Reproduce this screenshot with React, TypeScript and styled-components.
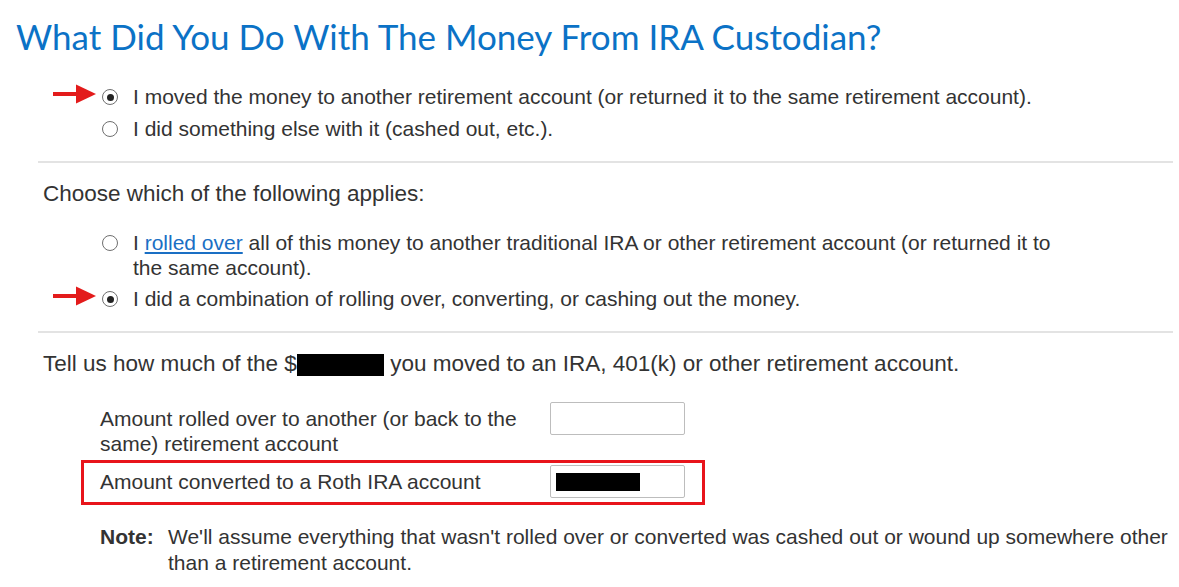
import React from 'react';
import styled, { createGlobalStyle } from 'styled-components';

const GlobalStyle = createGlobalStyle`
  html, body {
    margin: 0;
    padding: 0;
    background: #ffffff;
  }
  body {
    font-family: "Liberation Sans", Arial, sans-serif;
    color: #333333;
  }
`;

function Arrow() {
  return (
    <ArrowWrapper>
      <svg width="43" height="20" viewBox="0 0 43 20">
        <rect x="0" y="8" width="25" height="4" fill="#e31b1b" />
        <polygon points="23,0.5 43,10 23,19.5" fill="#e31b1b" />
      </svg>
    </ArrowWrapper>
  );
}

interface RadioOptionProps {
  checked?: boolean;
  marked?: boolean;
  children: React.ReactNode;
}

function RadioOption({ checked = false, marked = false, children }: RadioOptionProps) {
  return (
    <OptionRow>
      <MarkerSlot>{marked && <Arrow />}</MarkerSlot>
      <RadioCircle $checked={checked} />
      <OptionText>{children}</OptionText>
    </OptionRow>
  );
}

function App() {
  return (
    <>
      <GlobalStyle />
      <Page>
        <Title>What Did You Do With The Money From IRA Custodian?</Title>

        <OptionGroup>
          <RadioOption checked marked>
            I moved the money to another retirement account (or returned it to the same retirement
            account).
          </RadioOption>
          <RadioOption>I did something else with it (cashed out, etc.).</RadioOption>
        </OptionGroup>

        <Divider />

        <Section>
          <Prompt>Choose which of the following applies:</Prompt>
          <OptionGroup $narrow>
            <RadioOption>
              I <TextLink href="#">rolled over</TextLink> all of this money to another traditional
              IRA or other retirement account (or returned it to the same account).
            </RadioOption>
            <RadioOption checked marked>
              I did a combination of rolling over, converting, or cashing out the money.
            </RadioOption>
          </OptionGroup>
        </Section>

        <Divider />

        <Section>
          <Prompt>
            Tell us how much of the $<Redacted $width={87} $height={22} /> you moved to an IRA,
            401(k) or other retirement account.
          </Prompt>

          <AmountList>
            <AmountRow>
              <AmountLabel>
                Amount rolled over to another (or back to the same) retirement account
              </AmountLabel>
              <AmountInput />
            </AmountRow>
            <AmountRow $highlighted>
              <AmountLabel $inline>Amount converted to a Roth IRA account</AmountLabel>
              <AmountInput>
                <Redacted $width={84} $height={18} />
              </AmountInput>
            </AmountRow>
          </AmountList>

          <Note>
            <NoteLabel>Note:</NoteLabel>
            <NoteText>
              We'll assume everything that wasn't rolled over or converted was cashed out or wound up
              somewhere other than a retirement account.
            </NoteText>
          </Note>
        </Section>
      </Page>
    </>
  );
}
export default App;

const Page = styled.div`
  width: 1179px;
  padding: 13px 0 0 16px;
  box-sizing: border-box;
`;

const Title = styled.h1`
  margin: 0;
  font-family: Lato, "Open Sans", sans-serif;
  font-weight: 400;
  font-size: 35px;
  line-height: 46px;
  color: #0b72c6;
`;

const OptionGroup = styled.div<{ $narrow?: boolean }>`
  display: flex;
  flex-direction: column;
  row-gap: ${({ $narrow }) => ($narrow ? '6px' : '7px')};
  margin-top: ${({ $narrow }) => ($narrow ? '22px' : '25px')};
  max-width: ${({ $narrow }) => ($narrow ? '1040px' : 'none')};
`;

const OptionRow = styled.div`
  display: flex;
  align-items: flex-start;
`;

const MarkerSlot = styled.div`
  width: 86px;
  flex-shrink: 0;
  display: flex;
  justify-content: flex-end;
  padding-right: 6px;
  box-sizing: border-box;
`;

const ArrowWrapper = styled.div`
  display: flex;
  align-items: center;
  height: 20px;
`;

const RadioCircle = styled.span<{ $checked: boolean }>`
  position: relative;
  flex-shrink: 0;
  width: 16px;
  height: 16px;
  margin: 5px 15px 0 0;
  border: 1px solid #6f6f6f;
  border-radius: 50%;
  box-sizing: border-box;
  background: #ffffff;

  &::after {
    content: '';
    display: ${({ $checked }) => ($checked ? 'block' : 'none')};
    position: absolute;
    top: 3.5px;
    left: 3.5px;
    width: 7px;
    height: 7px;
    border-radius: 50%;
    background: #222222;
  }
`;

const OptionText = styled.div`
  font-size: 21px;
  line-height: 25px;
  color: #333333;
`;

const TextLink = styled.a`
  color: #1a6fc4;
  text-decoration: underline;
`;

const Divider = styled.hr`
  margin: 20px 6px 0 22px;
  border: none;
  border-top: 2px solid #e3e3e3;
`;

const Section = styled.div`
  padding-top: 17px;
`;

const Prompt = styled.div`
  padding-left: 27px;
  font-size: 22.5px;
  line-height: 28px;
  color: #333333;
`;

const Redacted = styled.span<{ $width: number; $height: number }>`
  display: inline-block;
  vertical-align: middle;
  width: ${({ $width }) => $width}px;
  height: ${({ $height }) => $height}px;
  background: #000000;
`;

const AmountList = styled.div`
  display: flex;
  flex-direction: column;
  row-gap: 1px;
  margin: 24px 0 0 65px;
  width: 624px;
`;

const AmountRow = styled.div<{ $highlighted?: boolean }>`
  display: flex;
  align-items: ${({ $highlighted }) => ($highlighted ? 'center' : 'flex-start')};
  justify-content: space-between;
  padding: ${({ $highlighted }) => ($highlighted ? '2px 17px 4px 16px' : '0 17px 0 16px')};
  border: 3px solid ${({ $highlighted }) => ($highlighted ? '#e8141b' : 'transparent')};
  border-top-width: ${({ $highlighted }) => ($highlighted ? '3px' : '0')};
`;

const AmountLabel = styled.div<{ $inline?: boolean }>`
  width: 430px;
  padding-top: ${({ $inline }) => ($inline ? '0' : '4px')};
  font-size: 21px;
  line-height: 25px;
  color: #333333;
`;

const AmountInput = styled.div`
  width: 135px;
  height: 33px;
  display: flex;
  align-items: center;
  padding-left: 5px;
  box-sizing: border-box;
  border: 1px solid #bdbdbd;
  border-radius: 2px;
  background: #ffffff;
`;

const Note = styled.div`
  display: flex;
  margin: 19px 0 0 84px;
  width: 1079px;
`;

const NoteLabel = styled.div`
  width: 68px;
  flex-shrink: 0;
  font-size: 21px;
  line-height: 26px;
  font-weight: 700;
`;

const NoteText = styled.div`
  font-size: 21px;
  line-height: 26px;
`;
